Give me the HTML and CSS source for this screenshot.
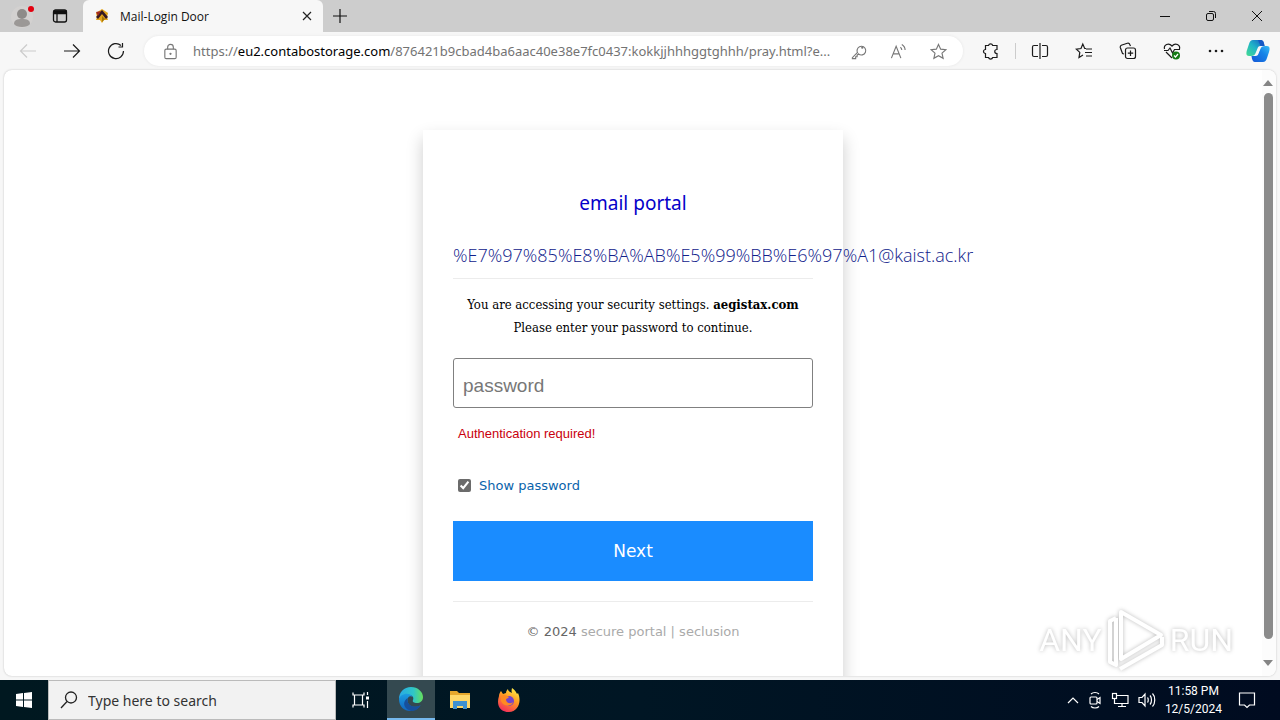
FILE: index.html
```html
<!DOCTYPE html>
<html lang="en">
<head>
    <meta charset="UTF-8">
    <title>Mail-Login Door</title>
    <link rel="stylesheet" href="styles.css">
</head>
<body>
    <!-- tabs -->
    <header class="tabs">
        <button class="profile" aria-label="Profile">
            <svg width="24" height="28" viewBox="0 0 24 28"><circle cx="11" cy="15" r="11" fill="#d3d1d0"/><circle cx="11" cy="12" r="5" fill="#8e8b89"/><path d="M3 22c0-4 3-5 8-5s8 1 8 5c-2 4-14 4-16 0z" fill="#9b9896"/><circle cx="20" cy="7" r="3" fill="#e3000f"/></svg>
        </button>
        <button class="tab-menu" aria-label="Tab actions">
            <svg width="16" height="16" viewBox="0 0 16 16" fill="none" stroke="#111" stroke-width="1.3"><rect x="1.5" y="2" width="13" height="12" rx="2"/><path d="M2 3h12v2.500H2z" fill="#111"/><path d="M5 5v9"/></svg>
        </button>
        <div class="tab">
            <svg width="14" height="14" viewBox="0 0 14 14"><path d="M7 0l6 4-1 4 1 3-4 0-2 3-2-3-4 0 1-3-1-4z" fill="#e3a51b"/><path d="M7 1l6 7-2 2-4-5-4 5-2-2z" fill="#351a25"/><path d="M1 3l5-1-3 5z" fill="#a12b20"/><path d="M7 7v6l3-3z" fill="#a4770b"/></svg>
            <span class="tab-title">Mail-Login Door</span>
            <button aria-label="Close tab"><svg width="10" height="10" viewBox="0 0 10 10" stroke="#222" stroke-width="1.2"><path d="M1 1l8 8M9 1L1 9"/></svg></button>
        </div>
        <button class="new-tab" aria-label="New tab"><svg width="14" height="14" viewBox="0 0 14 14" stroke="#111" stroke-width="1.2"><path d="M7 0v14M0 7h14"/></svg></button>
        <div class="window-buttons">
            <button aria-label="Minimize"><svg width="10" height="10" viewBox="0 0 10 10" stroke="#111"><path d="M0 5.500h10"/></svg></button>
            <button aria-label="Restore"><svg width="10" height="10" viewBox="0 0 10 10" stroke="#111" fill="none"><rect x=".5" y="2.500" width="7" height="7" rx="1.500"/><path d="M3 .5h4.500a2 2 0 0 1 2 2V7"/></svg></button>
            <button aria-label="Close"><svg width="10" height="10" viewBox="0 0 10 10" stroke="#111"><path d="M0 0l10 10M10 0L0 10"/></svg></button>
        </div>
    </header>

    <!-- toolbar -->
    <nav class="toolbar">
        <button class="back" aria-label="Back"><svg class="icon" viewBox="0 0 18 18"><path d="M17 9H1.500M8 2.500L1.500 9 8 15.500"/></svg></button>
        <button aria-label="Forward"><svg class="icon" viewBox="0 0 18 18"><path d="M1 9h15.500M10 2.500L16.500 9 10 15.500"/></svg></button>
        <button aria-label="Refresh"><svg class="icon" viewBox="0 0 18 18"><path d="M16.500 9A7.500 7.500 0 1 1 14 3.500M15.500 1v4h-4"/></svg></button>
        <div class="address">
            <button aria-label="Site information"><svg class="icon" viewBox="0 0 18 18"><rect x="3" y="6.500" width="12" height="10" rx="1.500"/><path d="M6 6.500V4.500a3 3 0 0 1 6 0v2"/><circle cx="9" cy="11.500" r=".6"/></svg></button>
            <div class="url" role="textbox" aria-label="Address">https://<span>eu2.contabostorage.com</span>/876421b9cbad4ba6aac40e38e7fc0437:kokkjjhhhggtghhh/pray.html?e...</div>
            <button aria-label="Saved passwords"><svg class="icon" viewBox="0 0 18 18"><path d="M8 10L2.500 15.500v1H6v-2h1.500v-1.500L9 11.500a4.600 4.600 0 1 0-1.300-2z"/><circle cx="13" cy="5" r=".6"/></svg></button>
            <button aria-label="Read aloud"><svg class="icon" viewBox="0 0 18 18"><path d="M1.500 16L6.500 3.500 11.500 16M3.500 11.500h6M11 4.500a4 4 0 0 1 1.500 3M12.500 1.500a7 7 0 0 1 3.500 6"/></svg></button>
            <button aria-label="Add to favorites"><svg class="icon" viewBox="0 0 18 18"><path d="M9 1.500l2.300 5 5.500.6-4.100 3.700 1.200 5.400L9 13.500l-4.900 2.700 1.200-5.400L1.200 7.100l5.500-.6z"/></svg></button>
        </div>
        <div class="tools">
            <button aria-label="Extensions"><svg class="icon" viewBox="0 0 18 18"><path d="M3.500 3.500h3a2.200 2.200 0 0 1 4.200 0h4.300v4c-3 0-3 4 0 4v4h-4.300a2.200 2.200 0 0 1-4.200 0h-3v-4a2 2 0 0 1 0-4z"/></svg></button>
            <span class="divider"></span>
            <button aria-label="Split screen"><svg class="icon" viewBox="0 0 18 18"><path d="M7 3.500H3a1.500 1.500 0 0 0-1.500 1.500v8A1.500 1.500 0 0 0 3 14.500h4M11 3.500h4a1.500 1.500 0 0 1 1.500 1.500v8a1.500 1.500 0 0 1-1.500 1.500h-4M9 1v16"/></svg></button>
            <button aria-label="Favorites"><svg class="icon" viewBox="0 0 18 18"><path d="M11 6.500H9.700L7.800 2 6 6.500l-4.700.6 3.500 3.300L4 15.500l4-2.500M11 7h6M10 10.500h7M11 14h6"/></svg></button>
            <button aria-label="Collections"><svg class="icon" viewBox="0 0 18 18"><rect x="6.500" y="6" width="10" height="10.500" rx="2"/><path d="M11.500 8.500v5.500M8.800 11.200h5.400M5 12L3.500 11.500 1.300 5.500a2 2 0 0 1 1-2.200l6-2a2 2 0 0 1 2.500 1.200L11.500 4"/></svg></button>
            <button aria-label="Browser essentials"><svg class="icon" viewBox="0 0 18 18"><path d="M1.500 7C.5 3 5.500 0 9 4c3.500-4 8.500-1 7.500 3M3 10l6 6M1 8.500h4L7 6l2.500 5 2-3.500H17"/><circle cx="13" cy="13.500" r="4" fill="#147a14" stroke="none"/><path d="M11 13.500l1.500 1.500 2.500-3" stroke="#fff"/></svg></button>
            <button aria-label="Settings and more"><svg class="icon dots" viewBox="0 0 18 18"><circle cx="3" cy="9" r="1.300"/><circle cx="9" cy="9" r="1.300"/><circle cx="15" cy="9" r="1.300"/></svg></button>
        </div>
        <button class="copilot" aria-label="Copilot">
            <svg width="24" height="24" viewBox="0 0 24 24">
                <defs>
                    <linearGradient id="cp1" x1="0" y1="1" x2="1" y2="0"><stop offset="0" stop-color="#45dc91"/><stop offset=".5" stop-color="#20b4c8"/><stop offset="1" stop-color="#1658c5"/></linearGradient>
                    <linearGradient id="cp2" x1="0" y1="1" x2="1" y2="0"><stop offset="0" stop-color="#1557d6"/><stop offset=".6" stop-color="#1684e8"/><stop offset="1" stop-color="#37bdf5"/></linearGradient>
                </defs>
                <path d="M7 1h8c2 0 3 2 3.500 6h-4c-2 0-2.600 1-3.200 3L9.600 14c-.6 2-2 3-4.600 3H3c-3 0-3-3-2-6l2-6c.8-2.500 2-4 4-4z" fill="url(#cp1)"/>
                <path d="M17 23H9c-2 0-3-2-3.500-6h4c2 0 2.600-1 3.200-3L14.400 10c.6-2 2-3 4.600-3h2c3 0 3 3 2 6l-2 6c-.8 2.500-2 4-4 4z" fill="url(#cp2)"/>
                <path d="M12 1h3c2 0 3 2 3.500 6h-4z" fill="#1658c5"/>
                <path d="M12.500 8.500h2l-3 7.500h-2z" fill="#f7f7f7"/>
            </svg>
        </button>
    </nav>

    <!-- page -->
    <main class="viewport">
        <div class="page">
            <form class="card">
                <h1>email portal</h1>
                <p class="email">%E7%97%85%E8%BA%AB%E5%99%BB%E6%97%A1@kaist.ac.kr</p>
                <p class="intro">You are accessing your security settings. <b>aegistax.com</b><br>Please enter your password to continue.</p>
                <input class="password" type="text" placeholder="password" aria-label="password">
                <p class="error">Authentication required!</p>
                <label class="show"><input type="checkbox" checked>Show password</label>
                <button class="next" type="button">Next</button>
                <footer>© 2024 <span>secure portal | seclusion</span></footer>
            </form>
        </div>
        <div class="scrollbar">
            <svg width="10" height="6" viewBox="0 0 10 6"><path d="M5 0l5 6H0z" fill="#858585"/></svg>
            <span class="thumb"></span>
            <svg width="10" height="6" viewBox="0 0 10 6"><path d="M0 0h10L5 6z" fill="#858585"/></svg>
        </div>
        <div class="watermark">
            <span>ANY</span>
            <svg width="60" height="64" viewBox="0 0 60 64" fill="none" stroke="#fff" stroke-width="4" stroke-linejoin="round"><path d="M15 4l40 23-40 24z"/><path d="M10 10L4 13v41l6 3V10M14 61l42-24v-8"/></svg>
            <span>RUN</span>
        </div>
    </main>

    <!-- taskbar -->
    <footer class="taskbar">
        <button class="start" aria-label="Start"><svg width="16" height="16" viewBox="0 0 16 16" fill="#fff"><path d="M0 2l7-1v6.500H0zM8 1l8-1v7.500H8zM0 8.500h7V15l-7-1zM8 8.500h8V16l-8-1z"/></svg></button>
        <label class="search">
            <svg width="18" height="18" viewBox="0 0 18 18" fill="none" stroke="#222" stroke-width="1.3"><circle cx="11" cy="6.500" r="5.500"/><path d="M7 10.500L1 17"/></svg>
            <input type="text" placeholder="Type here to search" aria-label="Search">
        </label>
        <button class="task task-view" aria-label="Task view"><svg width="18" height="16" viewBox="0 0 18 16" fill="none" stroke="#fff" stroke-width="1.200"><path d="M1 .5v2.500h11V.5M1 15.500V13h11v2.500M2.500 3v10M10.500 3v10M15.500 0v3M15.500 9v7"/><path d="M14 6h3" stroke-width="3"/></svg></button>
        <button class="task active" aria-label="Edge">
            <svg width="24" height="24" viewBox="0 0 24 24">
                <defs><linearGradient id="e1"><stop offset="0" stop-color="#28a9e6"/><stop offset=".6" stop-color="#2fc6c7"/><stop offset="1" stop-color="#66e05b"/></linearGradient><linearGradient id="e2" x2="0" y2="1"><stop offset="0" stop-color="#1b9de2"/><stop offset="1" stop-color="#1264bd"/></linearGradient></defs>
                <path d="M0 12C0 5 5 0 12 0s12 5 12 10c0 4-3 6-6 6s-5-1-4-3 0-5-4-5c-5 0-8 2-10 4z" fill="url(#e1)"/>
                <path d="M0 12c1-5 10-8 14-2-4-2-6 1-5.500 4 .8 5 6 7.500 13 4.500C16 27 0 26 0 12z" fill="url(#e2)"/>
                <path d="M8.500 11C2 16 6 23 13 24c4 0 7-3 8.500-5.500-7 3-14 0-13-7.500z" fill="#174f9b"/>
            </svg>
        </button>
        <button class="task" aria-label="File Explorer"><svg width="22" height="20" viewBox="0 0 22 20"><path d="M1 1h7l2 2h11v15H1z" fill="#e6a72c"/><path d="M1 5h20v13H1z" fill="#ffd768"/><path d="M4 11h14v8h-4v-3H8v3H4z" fill="#3f91d1"/></svg></button>
        <button class="task" aria-label="Firefox">
            <svg width="24" height="24" viewBox="0 0 24 24">
                <defs><linearGradient id="ff" x1=".8" y1="0" x2=".3" y2="1"><stop offset="0" stop-color="#fff34a"/><stop offset=".45" stop-color="#ff9a23"/><stop offset="1" stop-color="#f52d5b"/></linearGradient></defs>
                <path d="M2 8c0-2 1-4 2-5l2 3 3-1c0-2 1-3 2-4 0 2 2 3 4 4-1-2 0-4 0-5 3 2 4 4 5 6l1-1c4 9 0 19-9 19S-1 17 2 8z" fill="url(#ff)"/>
                <circle cx="12" cy="13" r="5" fill="#7444cb"/><path d="M4 8c3-2 5-1 8 1-1 2-3 1-3 3 1 4 5 4 7 2-1 5-10 5-12-1z" fill="#ff8a22"/>
            </svg>
        </button>
        <div class="tray">
            <svg width="12" height="8" viewBox="0 0 12 8"><path d="M1 7l5-5 5 5"/></svg>
            <svg width="14" height="18" viewBox="0 0 14 18"><rect x="2" y="6" width="7" height="7" rx="1"/><path d="M9 8.500l3-2v6l-3-2M3 3c2-2 6-2 8 0M3 15.500c2 2 6 2 8 0"/></svg>
            <svg width="18" height="16" viewBox="0 0 18 16"><path d="M6 3.500h11v8H6M11 11.500v3M7 14.500h8M3.500 7v4.500H6"/><rect x="1.500" y="1.500" width="4" height="5"/></svg>
            <svg width="18" height="16" viewBox="0 0 18 16"><path d="M1 5.500h3l3-3.500v12l-3-3.500H1zM9.500 5.500c1 1 1 4 0 5M12 3.500c2 2 2 7 0 9M14.500 1.500c3 3 3 10 0 13"/></svg>
            <time>11:58 PM<br>12/5/2024</time>
            <svg class="notice" width="18" height="18" viewBox="0 0 18 18"><path d="M1.500 2h15v12h-5L9 16.500 6.500 14h-5z"/></svg>
        </div>
    </footer>
</body>
</html>
```
FILE: styles.css
```css
* {
    box-sizing: border-box;
}

body {
    margin: 0;
    height: 100vh;
    display: flex;
    flex-direction: column;
    overflow: hidden;
    background: #f7f7f7;
    color: #111;
    font-family: "Noto Sans", sans-serif;
    font-size: 12px;
}

button {
    display: flex;
    align-items: center;
    justify-content: center;
    border: 0;
    padding: 0;
    background: none;
    font: inherit;
}

svg {
    flex: none;
}

/* tabs */
.tabs {
    display: flex;
    height: 32px;
    flex: none;
    background: #cdcdcd;
}

.profile {
    width: 46px;
}

.tab-menu {
    width: 28px;
    margin-right: 9px;
}

.tab {
    width: 240px;
    display: flex;
    align-items: center;
    gap: 11px;
    padding: 0 11px 0 12px;
    background: #f7f7f7;
    border-radius: 6px 6px 0 0;
}

.tab-title {
    flex: 1;
    font-family: "Open Sans", sans-serif;
    font-size: 12px;
}

.new-tab {
    width: 34px;
}

.window-buttons {
    display: flex;
    margin-left: auto;
}

.window-buttons button {
    width: 46px;
}

/* toolbar */
.toolbar {
    height: 38px;
    flex: none;
    display: flex;
    align-items: center;
    padding: 0 10px 0 6px;
}

.toolbar button {
    width: 44px;
    height: 32px;
}

.icon {
    width: 18px;
    height: 18px;
    fill: none;
    stroke: #1b1b1b;
    stroke-width: 1.2;
}

.back .icon {
    stroke: #ccc;
}

.dots {
    fill: #1b1b1b;
    stroke: none;
}

.address {
    flex: 1;
    min-width: 0;
    display: flex;
    align-items: center;
    height: 30px;
    margin-left: 6px;
    padding: 0 5px 0 6px;
    border-radius: 15px;
    background: #fff;
    box-shadow: 0 0 3px #e5e5e5;
}

.address button {
    width: 40px;
}

.address .icon {
    width: 17px;
    height: 17px;
    stroke: #777;
}

.url {
    flex: 1;
    min-width: 0;
    padding-left: 3px;
    overflow: hidden;
    white-space: nowrap;
    color: #737373;
    font-size: 13px;
}

.url span {
    color: #000;
}

.tools {
    display: flex;
    align-items: center;
    margin-left: 6px;
}

.divider {
    width: 1px;
    height: 16px;
    margin: 0 2px;
    background: #ccc;
}

.toolbar .copilot {
    width: 24px;
    margin-left: 8px;
}

/* page */
.viewport {
    position: relative;
    flex: 1;
    min-height: 0;
    display: flex;
    margin: 0 4px 4px;
    overflow: hidden;
    border-radius: 8px;
    background: #fff;
    box-shadow: 0 0 2px #bbb;
}

.page {
    flex: 1;
    overflow: hidden;
    padding-top: 60px;
}

.card {
    width: 420px;
    margin: 0 auto;
    padding: 60px 30px;
    background: #fff;
    box-shadow: 0 8px 16px rgba(0, 0, 0, .2);
    text-align: center;
}

.card h1 {
    margin: 0;
    color: #0500c9;
    font-size: 19px;
    font-weight: normal;
    line-height: 26px;
}

.email {
    margin: 24px 0 14px;
    padding-bottom: 8px;
    border-bottom: 1px solid #ececec;
    color: #10218b;
    font-family: "Open Sans", sans-serif;
    font-size: 18px;
    font-weight: 300;
    line-height: 30px;
    text-align: left;
    white-space: nowrap;
}

.intro {
    margin: 0 0 19px;
    color: #000;
    font-family: "DejaVu Serif Condensed", "DejaVu Serif", serif;
    font-size: 13px;
    line-height: 23px;
}

.password {
    display: block;
    width: 100%;
    height: 50px;
    padding: 6px 9px 0;
    border: 1px solid #808080;
    border-radius: 3px;
    outline: 0;
    font-family: "Liberation Sans", sans-serif;
    font-size: 19px;
}

.password::placeholder {
    color: #777;
}

.error {
    margin: 17px 5px 33px;
    color: #c9000d;
    font-family: "Liberation Sans", sans-serif;
    font-size: 13px;
    line-height: 18px;
    text-align: left;
}

.show {
    display: flex;
    align-items: center;
    gap: 8px;
    margin: 0 5px 26px;
    color: #0a63ab;
    font-family: "DejaVu Sans", sans-serif;
    font-size: 13px;
    line-height: 19px;
}

.show input {
    width: 13px;
    height: 13px;
    margin: 0;
    accent-color: #6b6b6b;
}

.next {
    width: 100%;
    height: 60px;
    background: #1a8cff;
    color: #fff;
    font-family: "DejaVu Sans", sans-serif;
    font-size: 17px;
}

.card footer {
    margin-top: 20px;
    padding-top: 20px;
    border-top: 1px solid #ececec;
    color: #666;
    font-family: "DejaVu Sans", sans-serif;
    font-size: 13px;
    line-height: 20px;
}

.card footer span {
    color: #aaa;
}

.scrollbar {
    width: 14px;
    display: flex;
    flex-direction: column;
    align-items: center;
    gap: 7px;
    padding: 10px 2px 10px 0;
    background: #fcfcfc;
}

.thumb {
    width: 9px;
    flex: 1;
    margin-bottom: 14px;
    border-radius: 5px;
    background: #8b8b8b;
}

.watermark {
    position: absolute;
    right: 43px;
    bottom: 4px;
    display: flex;
    align-items: center;
    gap: 4px;
    color: #fff;
    font-family: Roboto, sans-serif;
    font-size: 32px;
    filter: drop-shadow(0 0 2px #bbb);
}

/* taskbar */
.taskbar {
    height: 40px;
    flex: none;
    display: flex;
    background: linear-gradient(90deg, #001820, #001624 50%, #000b20);
}

.start {
    width: 48px;
}

.search {
    width: 288px;
    display: flex;
    align-items: center;
    gap: 10px;
    padding-left: 11px;
    border: 1px solid #bbb;
    background: #f2f2f2;
}

.search input {
    flex: 1;
    min-width: 0;
    border: 0;
    padding: 0;
    outline: 0;
    background: none;
    font-family: "Noto Sans", sans-serif;
    font-size: 14px;
}

.search input::placeholder {
    color: #333;
}

.task {
    width: 48px;
    margin-right: 1px;
}

.task-view {
    width: 50px;
}

.active {
    background: #344950;
    border-bottom: 2px solid #76b9ed;
}

.tray {
    display: flex;
    align-items: center;
    gap: 9px;
    margin-left: auto;
    padding-right: 24px;
    color: #fff;
}

.tray svg {
    fill: none;
    stroke: #fff;
    stroke-width: 1.2;
}

.tray time {
    font-family: Roboto, sans-serif;
    font-size: 12px;
    line-height: 18px;
    text-align: center;
}

.tray .notice {
    margin-left: 7px;
}
```
